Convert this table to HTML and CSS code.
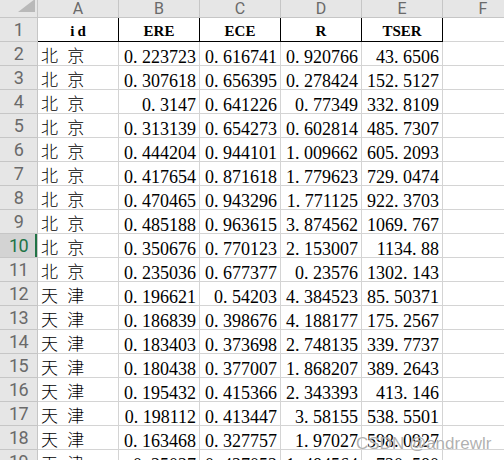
FILE: index.html
```html
<!DOCTYPE html>
<html lang="zh">
<head>
<meta charset="utf-8">
<title>Sheet</title>
<link rel="stylesheet" href="styles.css">
</head>
<body>
<div class="sheet">
  <div class="corner"><svg width="17" height="13" viewBox="0 0 17 13"><polygon points="17,0 17,13 0,13" fill="#b9b9b9"/></svg></div>
  <div class="ch">A</div><div class="ch">B</div><div class="ch">C</div><div class="ch">D</div><div class="ch">E</div><div class="ch">F</div>

  <div class="rh">1</div><div class="c h id">id</div><div class="c h">ERE</div><div class="c h">ECE</div><div class="c h">R</div><div class="c h">TSER</div><div class="c"></div>

  <div class="rh">2</div><div class="c t">北 京</div><div class="c n">0<span class="p">.</span>223723</div><div class="c n">0<span class="p">.</span>616741</div><div class="c n">0<span class="p">.</span>920766</div><div class="c n">43<span class="p">.</span>6506</div><div class="c"></div>
  <div class="rh">3</div><div class="c t">北 京</div><div class="c n">0<span class="p">.</span>307618</div><div class="c n">0<span class="p">.</span>656395</div><div class="c n">0<span class="p">.</span>278424</div><div class="c n">152<span class="p">.</span>5127</div><div class="c"></div>
  <div class="rh">4</div><div class="c t">北 京</div><div class="c n">0<span class="p">.</span>3147</div><div class="c n">0<span class="p">.</span>641226</div><div class="c n">0<span class="p">.</span>77349</div><div class="c n">332<span class="p">.</span>8109</div><div class="c"></div>
  <div class="rh">5</div><div class="c t">北 京</div><div class="c n">0<span class="p">.</span>313139</div><div class="c n">0<span class="p">.</span>654273</div><div class="c n">0<span class="p">.</span>602814</div><div class="c n">485<span class="p">.</span>7307</div><div class="c"></div>
  <div class="rh">6</div><div class="c t">北 京</div><div class="c n">0<span class="p">.</span>444204</div><div class="c n">0<span class="p">.</span>944101</div><div class="c n">1<span class="p">.</span>009662</div><div class="c n">605<span class="p">.</span>2093</div><div class="c"></div>
  <div class="rh">7</div><div class="c t">北 京</div><div class="c n">0<span class="p">.</span>417654</div><div class="c n">0<span class="p">.</span>871618</div><div class="c n">1<span class="p">.</span>779623</div><div class="c n">729<span class="p">.</span>0474</div><div class="c"></div>
  <div class="rh">8</div><div class="c t">北 京</div><div class="c n">0<span class="p">.</span>470465</div><div class="c n">0<span class="p">.</span>943296</div><div class="c n">1<span class="p">.</span>771125</div><div class="c n">922<span class="p">.</span>3703</div><div class="c"></div>
  <div class="rh">9</div><div class="c t">北 京</div><div class="c n">0<span class="p">.</span>485188</div><div class="c n">0<span class="p">.</span>963615</div><div class="c n">3<span class="p">.</span>874562</div><div class="c n">1069<span class="p">.</span>767</div><div class="c"></div>
  <div class="rh sel">10</div><div class="c t">北 京</div><div class="c n">0<span class="p">.</span>350676</div><div class="c n">0<span class="p">.</span>770123</div><div class="c n">2<span class="p">.</span>153007</div><div class="c n">1134<span class="p">.</span>88</div><div class="c"></div>
  <div class="rh">11</div><div class="c t">北 京</div><div class="c n">0<span class="p">.</span>235036</div><div class="c n">0<span class="p">.</span>677377</div><div class="c n">0<span class="p">.</span>23576</div><div class="c n">1302<span class="p">.</span>143</div><div class="c"></div>
  <div class="rh">12</div><div class="c t">天 津</div><div class="c n">0<span class="p">.</span>196621</div><div class="c n">0<span class="p">.</span>54203</div><div class="c n">4<span class="p">.</span>384523</div><div class="c n">85<span class="p">.</span>50371</div><div class="c"></div>
  <div class="rh">13</div><div class="c t">天 津</div><div class="c n">0<span class="p">.</span>186839</div><div class="c n">0<span class="p">.</span>398676</div><div class="c n">4<span class="p">.</span>188177</div><div class="c n">175<span class="p">.</span>2567</div><div class="c"></div>
  <div class="rh">14</div><div class="c t">天 津</div><div class="c n">0<span class="p">.</span>183403</div><div class="c n">0<span class="p">.</span>373698</div><div class="c n">2<span class="p">.</span>748135</div><div class="c n">339<span class="p">.</span>7737</div><div class="c"></div>
  <div class="rh">15</div><div class="c t">天 津</div><div class="c n">0<span class="p">.</span>180438</div><div class="c n">0<span class="p">.</span>377007</div><div class="c n">1<span class="p">.</span>868207</div><div class="c n">389<span class="p">.</span>2643</div><div class="c"></div>
  <div class="rh">16</div><div class="c t">天 津</div><div class="c n">0<span class="p">.</span>195432</div><div class="c n">0<span class="p">.</span>415366</div><div class="c n">2<span class="p">.</span>343393</div><div class="c n">413<span class="p">.</span>146</div><div class="c"></div>
  <div class="rh">17</div><div class="c t">天 津</div><div class="c n">0<span class="p">.</span>198112</div><div class="c n">0<span class="p">.</span>413447</div><div class="c n">3<span class="p">.</span>58155</div><div class="c n">538<span class="p">.</span>5501</div><div class="c"></div>
  <div class="rh">18</div><div class="c t">天 津</div><div class="c n">0<span class="p">.</span>163468</div><div class="c n">0<span class="p">.</span>327757</div><div class="c n">1<span class="p">.</span>97027</div><div class="c n">598<span class="p">.</span>0927</div><div class="c"></div>
  <div class="rh">19</div><div class="c t">天 津</div><div class="c n">0<span class="p">.</span>25027</div><div class="c n">0<span class="p">.</span>427052</div><div class="c n">1<span class="p">.</span>484564</div><div class="c n">720<span class="p">.</span>580</div><div class="c"></div>
</div>
<div class="mark">CSDN @andrewlr</div>
</body>
</html>
```

FILE: styles.css
```css
* {
  box-sizing: border-box;
  margin: 0;
  padding: 0;
}

html, body {
  width: 504px;
  height: 460px;
  overflow: hidden;
  background: #ffffff;
}

.sheet {
  display: grid;
  grid-template-columns: 38px repeat(6, 81px);
  grid-template-rows: 18px;
  grid-auto-rows: 24px;
}

.corner, .ch, .rh {
  background: #e6e6e6;
  border-right: 1px solid #c6c6c6;
  border-bottom: 1px solid #c6c6c6;
}

.corner {
  display: flex;
  justify-content: flex-end;
  align-items: flex-end;
  padding: 0 2px 5px 0;
}

.corner svg {
  display: block;
}

.ch {
  font: 16px/17px Roboto, "Liberation Sans", sans-serif;
  color: #6a6a6a;
  text-align: center;
}

.rh {
  font: 18px/23px Roboto, "Liberation Sans", sans-serif;
  color: #6a6a6a;
  text-align: center;
  letter-spacing: -0.5px;
}

.rh.sel {
  background: #d3d3d3;
  color: #217346;
  box-shadow: inset -2px 0 0 #217346;
}

.c {
  border-right: 1px solid #d4d4d4;
  border-bottom: 1px solid #d4d4d4;
  font: 18px/16px "Liberation Serif", "Noto Sans CJK SC", serif;
  padding-top: 7px;
  color: #000;
  white-space: nowrap;
}

.n {
  text-align: right;
  padding-right: 3px;
}

.t {
  padding-left: 3px;
  font-size: 17px;
  font-weight: 300;
  word-spacing: 5px;
}

.p {
  letter-spacing: 4.5px;
}

.h {
  border-right-color: #000;
  border-bottom-color: #000;
  font-weight: bold;
  font-size: 15px;
  line-height: 15px;
  padding-top: 6px;
  text-align: center;
}

.id {
  letter-spacing: 3px;
  text-indent: 3px;
}

.mark {
  position: absolute;
  left: 356px;
  top: 435px;
  font: 17px/17px "Liberation Sans", Arial, sans-serif;
  color: rgba(150, 150, 150, 0.75);
  text-shadow: 0 0 1px rgba(255, 255, 255, 0.9);
  white-space: nowrap;
}
```
